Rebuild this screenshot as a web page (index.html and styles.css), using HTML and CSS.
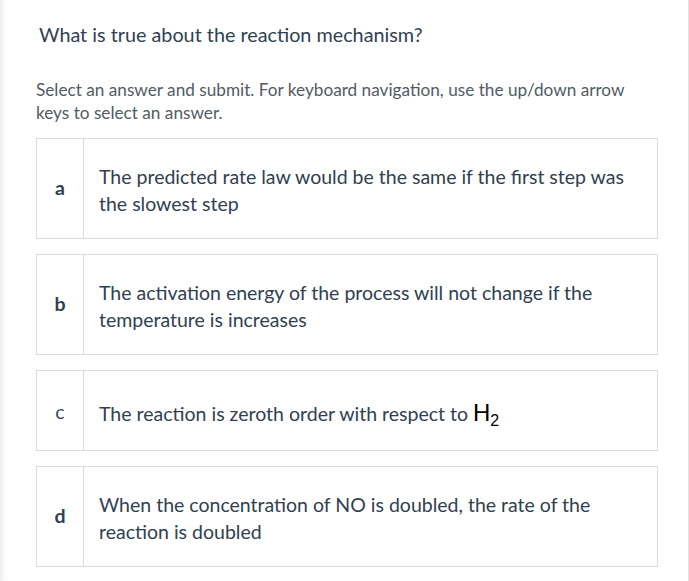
FILE: index.html
```html
<!DOCTYPE html>
<html>
<head>
<meta charset="utf-8">
<link rel="stylesheet" href="styles.css">
</head>
<body>
<div class="page">
  <h1 class="question">What is true about the reaction mechanism?</h1>
  <p class="instructions">Select an answer and submit. For keyboard navigation, use the up/down arrow keys to select an answer.</p>
  <div class="options">
    <div class="option tall">
      <div class="letter">a</div>
      <div class="text">The predicted rate law would be the same if the first step was the slowest step</div>
    </div>
    <div class="option tall">
      <div class="letter">b</div>
      <div class="text">The activation energy of the process will not change if the temperature is increases</div>
    </div>
    <div class="option short">
      <div class="letter light">c</div>
      <div class="text">The reaction is zeroth order with respect to <span class="formula">H<sub>2</sub></span></div>
    </div>
    <div class="option tall">
      <div class="letter">d</div>
      <div class="text">When the concentration of NO is doubled, the rate of the reaction is doubled</div>
    </div>
  </div>
</div>
</body>
</html>
```
FILE: styles.css
```css
html, body {
  margin: 0;
  padding: 0;
  background: #ffffff;
}
body {
  font-family: Lato, "Open Sans", sans-serif;
  color: #2f4152;
}
.page {
  box-sizing: border-box;
  width: 689px;
  height: 581px;
  padding: 18px 30px 0 36px;
  border-right: 1px solid #e2e2e2;
  box-shadow: inset 6px 0 5px -3px rgba(0,0,0,0.07);
}
.question {
  margin: 0 0 0 3px;
  font-size: 19.8px;
  font-weight: 400;
  line-height: 32px;
  color: #2f4152;
}
.instructions {
  margin: 28px 0 0 0;
  font-size: 17.2px;
  line-height: 23px;
  color: #505b66;
  width: 620px;
}
.options {
  margin-top: 14px;
  display: flex;
  flex-direction: column;
  gap: 15px;
  width: 622px;
}
.option {
  display: flex;
  border: 1px solid #dcdcdc;
  box-sizing: border-box;
}
.option.tall { height: 101px; }
.option.short { height: 81px; }
.letter {
  width: 47px;
  flex: none;
  border-right: 1px solid #dcdcdc;
  display: flex;
  align-items: center;
  justify-content: center;
  font-size: 19.5px;
  font-weight: 700;
  color: #2f4152;
  padding-bottom: 2px;
  box-sizing: border-box;
}
.letter.light { font-weight: 400; padding-bottom: 0; padding-top: 2px; color: #3b4b5a; }
.text {
  display: flex;
  align-items: center;
  padding: 2px 8px 0 15px;
  font-size: 19.5px;
  line-height: 27px;
  color: #2f4152;
}
.option.short .text { display: block; padding-top: 28px; }
.formula {
  font-family: "Liberation Sans", Arial, sans-serif;
  font-size: 24px;
  color: #000;
}
.formula sub {
  font-size: 16px;
  vertical-align: -5px;
  line-height: 0;
}
```
